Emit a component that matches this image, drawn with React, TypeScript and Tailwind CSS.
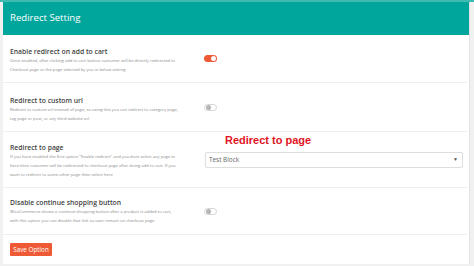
import type { ReactNode } from "react";

function Toggle({ on }: { on?: boolean }) {
  return on ? (
    <div className="w-[13px] h-[7px] rounded-full bg-[#ef5a36] flex items-center justify-end pr-[1px]">
      <div className="w-[5px] h-[5px] rounded-full bg-white" />
    </div>
  ) : (
    <div className="w-[13px] h-[7px] rounded-full bg-white border border-[#d6d6d6] flex items-center pl-[0.5px]">
      <div className="w-[5px] h-[5px] rounded-full bg-[#b5b5b5]" />
    </div>
  );
}

function Row({
  title,
  lines,
  className,
  children,
}: {
  title: string;
  lines: string[];
  className: string;
  children?: ReactNode;
}) {
  return (
    <div className={`relative flex border-b border-[#efefef] mr-[2px] ${className}`}>
      <div className="pl-[7px] w-[201px] shrink-0">
        <div className="text-[6.8px] leading-[8px] font-semibold text-[#3f3f3f] whitespace-nowrap">{title}</div>
        <div className="text-[4.2px] leading-[9px] text-[#8a8a8a] whitespace-nowrap">
          {lines.map((l) => (
            <div key={l}>{l}</div>
          ))}
        </div>
      </div>
      {children}
    </div>
  );
}

export default function App() {
  return (
    <div className="w-[474px] h-[266px] bg-[#f1f1f1] overflow-hidden font-['Open_Sans',sans-serif]">
      <div className="h-[2px] bg-[#3dbab2]" />
      <div className="ml-[3px] w-[467px] h-[262px] bg-white border-r border-[#e2e2e2]">
        <div className="h-[33px] bg-[#00a69c] flex items-center pl-[7px] text-white text-[9.6px]">
          Redirect Setting
        </div>

        <Row
          className="h-[48px] pt-[13px]"
          title="Enable redirect on add to cart"
          lines={[
            "Once enabled, after clicking add to cart button customer will be directly redirected to",
            "Checkout page or the page selected by you in below setting",
          ]}
        >
          <div className="self-center -mt-[13px]">
            <Toggle on />
          </div>
        </Row>

        <Row
          className="h-[49px] pt-[14px]"
          title="Redirect to custom url"
          lines={[
            "Redirect to custom url instead of page, so using this you can redirect to category page,",
            "tag page or post, or any third website url",
          ]}
        >
          <div className="self-center -mt-[14px]">
            <Toggle />
          </div>
        </Row>

        <Row
          className="h-[56px] pt-[12px]"
          title="Redirect to page"
          lines={[
            "If you have enabled the first option \"Enable redirect\" and you dont select any page in",
            "here then customer will be redirected to checkout page after doing add to cart. If you",
            "want to redirect to some other page then select here",
          ]}
        >
          <div className="absolute left-[222px] top-[0px] text-[11px] font-bold text-[#e0141e] font-['Liberation_Sans',sans-serif]">
            Redirect to page
          </div>
          <div className="mt-[8px] ml-[1px] w-[258px] h-[16px] border border-[#dedede] rounded-[2px] flex items-center justify-between pl-[3px] pr-[4px]">
            <span className="text-[6.4px] text-[#666]">Test Block</span>
            <span className="text-[5px] text-[#555]">▼</span>
          </div>
        </Row>

        <Row
          className="h-[47px] pt-[11px]"
          title="Disable continue shopping button"
          lines={[
            "WooCommerce shows a continue shopping button after a product is added to cart,",
            "with this option you can disable that link so user remain on checkout page",
          ]}
        >
          <div className="self-center -mt-[11px]">
            <Toggle />
          </div>
        </Row>

        <div className="pl-[7px] pt-[8px]">
          <button className="h-[13px] w-[42px] bg-[#ef5a36] text-white text-[6.3px] rounded-[1px] flex items-center justify-center">
            Save Option
          </button>
        </div>
      </div>
    </div>
  );
}
